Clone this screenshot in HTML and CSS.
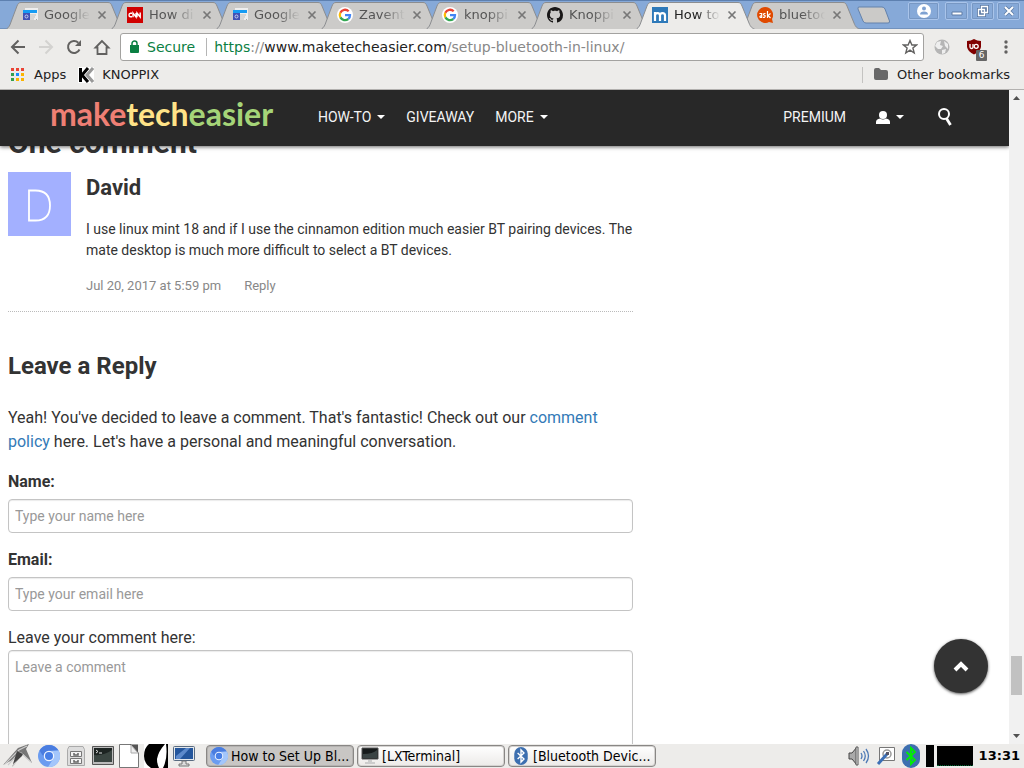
FILE: index.html
```
<!DOCTYPE html>
<html lang="en">
<head>
  <meta charset="UTF-8" />
  <meta name="viewport" content="width=device-width, initial-scale=1.0"/>
  <title>How to Set Up Bluetooth in Linux</title>
  <link rel="stylesheet" href="styles.css">
</head>
<body>

  <!-- shared icons -->
  <svg class="defs" width="0" height="0">
    <symbol id="tab-shape" viewBox="0 0 119 28"><path d="M0.5 28C3 26.500 4 24 5 21L11 5C12 2.500 13 1.500 15 1.500H102C104 1.500 105 2.500 106 5L113 22C114.500 26 116 27 118.500 28" stroke-width="1"/></symbol>
    <symbol id="close" viewBox="0 0 10 10"><path d="M1.500 1.500L8.500 8.500M8.500 1.500L1.500 8.500" fill="none" stroke="currentColor" stroke-width="1.700"/></symbol>
    <symbol id="gnews" viewBox="0 0 16 16"><path d="M3 1h13v12H3z" fill="#eee"/><path d="M1 3h14v3H1z" fill="#159bf3"/><path d="M8 8h6M8 10h5M8 12h4" stroke="#bbb"/><path d="M1 6h7v7H1z" fill="#3f51b5"/><circle cx="4.500" cy="9.500" r="1.500" fill="none" stroke="#c9cff0"/><path d="M14 12h1v1h-1z" fill="#aaa"/></symbol>
    <symbol id="google" viewBox="0 0 16 16"><circle cx="8" cy="8" r="8" fill="#fff"/><g fill="none" stroke-width="2.300"><path d="M11.700 4.300A5.200 5.200 0 0 0 3.300 5.800" stroke="#ea4335"/><path d="M3.300 5.800A5.200 5.200 0 0 0 3.400 10.400" stroke="#fbbc05"/><path d="M3.400 10.400A5.200 5.200 0 0 0 11.300 12" stroke="#34a853"/><path d="M11.300 12A5 5 0 0 0 13 8.200H8" stroke="#4285f4"/></g></symbol>
    <symbol id="chromium" viewBox="0 0 22 22"><circle cx="11" cy="11" r="11" fill="#6b9cf0"/><path d="M1.500 5.500A11 11 0 0 1 20.500 5.500L11 6A5 5 0 0 0 6.300 13z" fill="#4a7de0"/><path d="M20.500 5.500A11 11 0 0 1 10 22l5.500-8.500A5 5 0 0 0 11 6z" fill="#a3c6fb"/><circle cx="11" cy="11" r="5.300" fill="#eef4ff"/><circle cx="11" cy="11" r="4" fill="#477ee5"/></symbol>
    <symbol id="bluetooth" viewBox="0 0 18 24"><rect width="18" height="24" rx="9" fill="#3d6fb0"/><path d="M4.500 8L13 16L9 20V4L13 8L4.500 16" fill="none" stroke="currentColor" stroke-width="1.800"/></symbol>
  </svg>

  <!-- Browser tabs -->
  <div class="tab-strip">
    <div class="tabs">
      <div class="tab">
        <svg class="tab-bg"><use href="#tab-shape"/></svg>
        <svg class="favicon"><use href="#gnews"/></svg>
        <span class="tab-title">Google</span>
        <button class="tab-close" aria-label="Close tab"><svg><use href="#close"/></svg></button>
      </div>
      <div class="tab">
        <svg class="tab-bg"><use href="#tab-shape"/></svg>
        <svg class="favicon" viewBox="0 0 16 16"><path d="M0 0h16v16H0z" fill="#d10000"/><path d="M5 6.200H3.500Q2 6.200 2 8T3.500 9.800H5M6 10.300V6L9 10V6M10 10.300V6L13.200 10V5.500" fill="none" stroke="#fff" stroke-width="1.400"/></svg>
        <span class="tab-title">How di</span>
        <button class="tab-close" aria-label="Close tab"><svg><use href="#close"/></svg></button>
      </div>
      <div class="tab">
        <svg class="tab-bg"><use href="#tab-shape"/></svg>
        <svg class="favicon"><use href="#gnews"/></svg>
        <span class="tab-title">Google</span>
        <button class="tab-close" aria-label="Close tab"><svg><use href="#close"/></svg></button>
      </div>
      <div class="tab">
        <svg class="tab-bg"><use href="#tab-shape"/></svg>
        <svg class="favicon"><use href="#google"/></svg>
        <span class="tab-title">Zavent</span>
        <button class="tab-close" aria-label="Close tab"><svg><use href="#close"/></svg></button>
      </div>
      <div class="tab">
        <svg class="tab-bg"><use href="#tab-shape"/></svg>
        <svg class="favicon"><use href="#google"/></svg>
        <span class="tab-title">knoppi</span>
        <button class="tab-close" aria-label="Close tab"><svg><use href="#close"/></svg></button>
      </div>
      <div class="tab">
        <svg class="tab-bg"><use href="#tab-shape"/></svg>
        <svg class="favicon" viewBox="0 0 16 16"><path fill="#191717" d="M8 0C3.580 0 0 3.580 0 8c0 3.540 2.290 6.530 5.470 7.590.4.070.55-.17.55-.38 0-.19-.01-.82-.01-1.490-2.010.37-2.530-.49-2.690-.94-.09-.23-.48-.94-.82-1.130-.28-.15-.68-.52-.01-.53.63-.01 1.080.58 1.230.82.72 1.210 1.870.87 2.330.66.07-.52.28-.87.51-1.070-1.780-.2-3.640-.89-3.640-3.950 0-.87.31-1.590.82-2.150-.08-.2-.36-1.020.08-2.120 0 0 .67-.21 2.200.82.64-.18 1.320-.27 2-.27s1.360.09 2 .27c1.530-1.040 2.200-.82 2.200-.82.44 1.100.16 1.920.08 2.120.51.56.82 1.270.82 2.150 0 3.070-1.870 3.750-3.650 3.950.29.25.54.73.54 1.480 0 1.070-.01 1.930-.01 2.200 0 .21.15.46.55.38A8 8 0 0 0 16 8c0-4.420-3.580-8-8-8z"/></svg>
        <span class="tab-title">Knoppi</span>
        <button class="tab-close" aria-label="Close tab"><svg><use href="#close"/></svg></button>
      </div>
      <div class="tab active">
        <svg class="tab-bg"><use href="#tab-shape"/></svg>
        <svg class="favicon" viewBox="0 0 16 16"><path d="M0 0h16v16H0z" fill="#2e79b9"/><path d="M3 14V5M3 8.500C3 5.200 8 5.200 8 8.500V14M8 8.500C8 5.200 13 5.200 13 8.500V14" fill="none" stroke="#fff" stroke-width="2.200"/></svg>
        <span class="tab-title">How to</span>
        <button class="tab-close" aria-label="Close tab"><svg><use href="#close"/></svg></button>
      </div>
      <div class="tab">
        <svg class="tab-bg"><use href="#tab-shape"/></svg>
        <svg class="favicon" viewBox="0 0 16 16"><path d="M8 0a8 8 0 1 0 4 15l4 1-1-4A8 8 0 0 0 8 0z" fill="#e04a00"/><path d="M2.500 6.500h2.200v4H3.500q-1.500-1 1-2M8.500 6.500H7q-1 1.300 .5 1.800t0 2H6M10.500 4v7M13.500 6.500l-2.500 2 2.500 2.500" fill="none" stroke="#fff" stroke-width="1.200"/></svg>
        <span class="tab-title">bluetoo</span>
        <button class="tab-close" aria-label="Close tab"><svg><use href="#close"/></svg></button>
      </div>
    </div>
    <button class="new-tab" aria-label="New tab"><svg width="34" height="18" viewBox="0 0 34 18"><path d="M2 1H25Q27 1 28 3L32.500 15Q33 17 31 17H9Q7 17 6 15L1 3Q0.500 1 2 1z" fill="#cbcac8" stroke="#6482ab"/></svg></button>
    <div class="window-buttons">
      <button class="user" aria-label="User"><svg width="14" height="14" viewBox="0 0 14 14"><circle cx="7" cy="7" r="7" fill="#fff"/><circle cx="7" cy="4.500" r="2" fill="#7fa2d2"/><path d="M3 10.500Q3 7.500 7 7.500T11 10.500z" fill="#7fa2d2"/></svg></button>
      <button aria-label="Minimize"><svg width="12" height="12" viewBox="0 0 12 12"><path d="M1 7h10v3H1z" fill="#fff" stroke="#5d7ba5"/></svg></button>
      <button aria-label="Restore"><svg width="12" height="12" viewBox="0 0 12 12" fill="none"><path d="M4.500 1.500h6v6h-6zM1.500 4.500h6v6h-6z" stroke="#5d7ba5" stroke-width="3"/><path d="M4.500 1.500h6v6h-6zM1.500 4.500h6v6h-6z" stroke="#fff" stroke-width="1.300"/></svg></button>
      <button aria-label="Close"><svg width="12" height="12" viewBox="0 0 12 12"><path d="M2 2L10 10M10 2L2 10" stroke="#5d7ba5" stroke-width="3.500"/><path d="M2 2L10 10M10 2L2 10" stroke="#fff" stroke-width="2"/></svg></button>
    </div>
  </div>

  <!-- Toolbar -->
  <div class="toolbar">
    <div class="nav-buttons">
      <button aria-label="Back"><svg width="16" height="16" viewBox="0 0 16 16"><path d="M15 8H2M8.500 1.500L2 8l6.500 6.500" fill="none" stroke="#626160" stroke-width="2"/></svg></button>
      <button aria-label="Forward"><svg width="16" height="16" viewBox="0 0 16 16"><path d="M1 8H14M7.500 1.500L14 8l-6.500 6.500" fill="none" stroke="#d3d2d0" stroke-width="2"/></svg></button>
      <button aria-label="Reload"><svg width="16" height="16" viewBox="0 0 16 16"><path d="M13.500 10.500A6 6 0 1 1 12.300 3.700" fill="none" stroke="#626160" stroke-width="2"/><path d="M15 1v6H9z" fill="#626160"/></svg></button>
      <button aria-label="Home"><svg width="18" height="16" viewBox="0 0 18 16"><path d="M9 2L2.500 8.500H4.500V15H13.500V8.500H15.500z" fill="none" stroke="#626160" stroke-width="1.800"/></svg></button>
    </div>
    <div class="address-bar">
      <svg width="9" height="13" viewBox="0 0 9 13"><path d="M0 5h9v7q0 1-1 1H1q-1 0-1-1z" fill="#0b8043"/><path d="M2 6V3.500a2.500 2.500 0 0 1 5 0V6" fill="none" stroke="#0b8043" stroke-width="1.500"/></svg>
      <span class="secure">Secure</span>
      <div class="url" role="textbox" contenteditable="true" spellcheck="false" aria-label="Address"><span class="scheme">https</span>://<span class="host">www.maketecheasier.com</span>/setup-bluetooth-in-linux/</div>
      <button aria-label="Bookmark this page"><svg width="16" height="16" viewBox="0 0 16 16"><path d="M8 1.500L9.900 6H14.500L10.900 9L12.200 14L8 11.200L3.800 14L5.100 9L1.500 6H6.100z" fill="none" stroke="#626160" stroke-width="1.400"/></svg></button>
    </div>
    <div class="extensions">
      <button aria-label="Web extension"><svg width="16" height="16" viewBox="0 0 16 16"><circle cx="8" cy="8" r="7.500" fill="#b5b5b5"/><path d="M3 3l4-1-1 4 3 1-2 3H4L1 7zM10 2l4 3v5l-3-3zM8 11l4-1-1 4-3 1z" fill="#eee"/></svg></button>
      <button class="ublock" aria-label="uBlock"><svg width="16" height="16" viewBox="0 0 16 16"><path d="M8 0Q11 2 15 2V8Q14 13 8 15.500Q2 13 1 8V2Q5 2 8 0z" fill="#800000"/><path d="M4 5v3q0 1.500 1.500 1.500T7 8V5" fill="none" stroke="#fff" stroke-width="1.300"/><circle cx="10.200" cy="7.300" r="2" fill="none" stroke="#fff" stroke-width="1.300"/></svg><span class="badge">6</span></button>
      <button aria-label="Menu"><svg width="4" height="14" viewBox="0 0 4 14" fill="#626160"><circle cx="2" cy="2" r="1.700"/><circle cx="2" cy="7" r="1.700"/><circle cx="2" cy="12" r="1.700"/></svg></button>
    </div>
  </div>

  <div class="bookmarks">
    <a href="#"><svg width="16" height="14" viewBox="0 0 16 14"><path d="M1 0h3v3H1zM6 0h3v3H6zM11 0h3v3h-3z" fill="#ea4335"/><path d="M1 5h3v3H1zM1 10h3v3H1z" fill="#34a04f"/><path d="M6 5h3v3H6z" fill="#1a8cff"/><path d="M11 5h3v3h-3zM6 10h3v3H6zM11 10h3v3h-3z" fill="#fbb400"/></svg>Apps</a>
    <a href="#"><svg width="16" height="16" viewBox="0 0 16 16"><path d="M0 0h16v16H0z" fill="#fff"/><path d="M15 1L9 8l6 7" fill="none" stroke="#999" stroke-width="3"/><path d="M2.500 1v14M10 1L4 8l6 7" fill="none" stroke="#000" stroke-width="3"/></svg>KNOPPIX</a>
    <a class="other" href="#"><svg width="16" height="13" viewBox="0 0 16 13"><path d="M1 2q0-2 2-2h3l2 2h5q2 0 2 2v6q0 2-2 2H3q-2 0-2-2z" fill="#686868"/></svg>Other bookmarks</a>
  </div>

  <!-- Web page -->
  <div class="viewport">
    <div class="page">
      <header class="site-header">
        <a class="logo" href="#"><span class="make">make</span><span class="tech">tech</span><span class="easier">easier</span></a>
        <nav class="menu">
          <a class="dropdown" href="#">HOW-TO</a>
          <a href="#">GIVEAWAY</a>
          <a class="dropdown" href="#">MORE</a>
        </nav>
        <nav class="menu account">
          <a href="#">PREMIUM</a>
          <a class="dropdown" href="#" aria-label="Account"><svg width="14" height="13" viewBox="0 0 14 13" fill="#fff"><circle cx="7" cy="4" r="4"/><path d="M0 13v-2q0-3 4-3.500 3 2 6 0 4 .5 4 3.500v2z"/></svg></a>
          <a href="#" aria-label="Search"><svg width="16" height="18" viewBox="0 0 16 18" fill="none" stroke="#fff"><circle cx="7" cy="6" r="5" stroke-width="2"/><path d="M9.500 10.500L13.500 17" stroke-width="2.800"/></svg></a>
        </nav>
      </header>

      <main class="content">
        <h2 class="comments-title">One comment</h2>
        <article class="comment">
          <svg class="avatar" viewBox="0 0 63 64"><path d="M0 0h63v64H0z" fill="#a3b0ff"/><path d="M21 18.500V48.500H27.500Q42 48.500 42 33.500T27.500 18.500z" fill="none" stroke="#fff" stroke-width="1.800"/></svg>
          <div>
            <h3>David</h3>
            <p>I use linux mint 18 and if I use the cinnamon edition much easier BT pairing devices. The mate desktop is much more difficult to select a BT devices.</p>
            <div class="comment-meta"><span>Jul 20, 2017 at 5:59 pm</span><a href="#">Reply</a></div>
          </div>
        </article>

        <h3 class="reply-title">Leave a Reply</h3>
        <form>
          <p>Yeah! You've decided to leave a comment. That's fantastic! Check out our <a href="#">comment policy</a> here. Let's have a personal and meaningful conversation.</p>
          <div class="field">
            <label class="strong" for="name">Name:</label>
            <input id="name" type="text" placeholder="Type your name here">
          </div>
          <div class="field">
            <label class="strong" for="email">Email:</label>
            <input id="email" type="email" placeholder="Type your email here">
          </div>
          <label for="comment">Leave your comment here:</label>
          <textarea id="comment" rows="8" placeholder="Leave a comment"></textarea>
        </form>
      </main>
      <button class="to-top" aria-label="Back to top"><svg width="16" height="12" viewBox="0 0 16 12"><path d="M2 10L8 4L14 10" fill="none" stroke="#fff" stroke-width="4"/></svg></button>
    </div>
    <div class="scrollbar">
      <svg width="15" height="15" viewBox="0 0 15 15"><path d="M4 10L7.500 6L11 10z" fill="#505050"/></svg>
      <div class="track-above"></div>
      <div class="thumb"></div>
      <div class="track-below"></div>
      <svg width="15" height="15" viewBox="0 0 15 15"><path d="M4 5L7.500 9L11 5z" fill="#505050"/></svg>
    </div>
  </div>

  <!-- Desktop panel -->
  <div class="taskbar">
    <div class="launchers">
      <button aria-label="Menu"><svg width="30" height="24" viewBox="0 0 30 24"><path d="M0 21L15 4L26 0L23 5L29 19L20 10L9 23L13 14z" fill="#777"/><path d="M2 20L16 6L24 2M10 22L18 9L28 18M5 21L17 8" fill="none" stroke="#ccc" stroke-width="1.200"/><path d="M14 7L20 10L23 3L19 12L10 20" fill="#444"/></svg></button>
      <button aria-label="Chromium"><svg width="22" height="22"><use href="#chromium"/></svg></button>
      <button aria-label="Files"><svg width="22" height="22" viewBox="0 0 20 22"><path d="M3 1.500h14l1.500 3v16h-17v-16z" fill="#ddd" stroke="#aaa"/><path d="M4.500 6.500h11v5h-11zM4.500 13.500h11v5h-11z" fill="#f4f4f4" stroke="#777"/><path d="M8 8v2h4V8M8 15v2h4v-2" fill="none" stroke="#666" stroke-width="1.500"/></svg></button>
      <button aria-label="Terminal"><svg width="22" height="20" viewBox="0 0 22 20"><path d="M.5.500h21v18H.5z" fill="#bbb" stroke="#555"/><path d="M2 2h18v14H2z" fill="#1d2422"/><path d="M2 9Q12 10 20 4v12H2z" fill="#3a4541"/><path d="M4 4l2 1.500L4 7M7 7h3" fill="none" stroke="#ddd"/></svg></button>
      <button aria-label="Office"><svg width="20" height="24" viewBox="0 0 20 24"><path d="M.5.500H12L19.500 9V23.500H.5z" fill="#fff" stroke="#777"/><path d="M11 .5h8V9z" fill="#555"/><path d="M12 1v8h7z" fill="#eee" stroke="#aaa"/></svg></button>
      <button aria-label="Knoppix"><svg width="24" height="24" viewBox="0 0 24 24"><path d="M0 0h24v24H0z" fill="#fff"/><path d="M5 0H21Q14 8 13 15Q13 20 15 24H7Q0 20 0 12Q0 4 5 0zM22 0h2v24h-5Q24 14 22 0z"/></svg></button>
      <button aria-label="Desktop"><svg width="22" height="22" viewBox="0 0 22 22"><rect x=".5" y="1.500" width="21" height="14" rx="1" fill="#e4e8ec" stroke="#596b80"/><path d="M2 3h18v11H2z" fill="#24569c"/><path d="M3 11L13 3h4L7 14H3z" fill="#5d8acb"/><path d="M9 16h4v3h3v2H6v-2h3z" fill="#ddd" stroke="#777"/></svg></button>
    </div>
    <div class="tasks">
      <button class="task current"><svg width="18" height="18"><use href="#chromium"/></svg><span>How to Set Up Bl...</span></button>
      <button class="task"><svg width="18" height="18" viewBox="0 0 18 18"><path d="M1 1h16v11H1z" fill="#171b1b" stroke="#555"/><path d="M2 7Q12 7 16 3v8H2z" fill="#3b4444"/><path d="M7 13h4v2h3v2H4v-2h3z" fill="#ccc"/></svg><span>[LXTerminal]</span></button>
      <button class="task"><svg class="bt" width="18" height="18"><use href="#bluetooth"/></svg><span>[Bluetooth Devic...</span></button>
    </div>
    <div class="tray">
      <svg width="22" height="22" viewBox="0 0 22 22"><path d="M1 8h3l5-6v18l-5-6H1z" fill="#aaa" stroke="#444"/><path d="M8 2h2v18H8z" fill="#eee" stroke="#555"/><g fill="none" stroke="#4d79b5" stroke-width="1.300"><path d="M13 8q2 3 0 6M15.500 6q3.500 5 0 10M18 4q5 7 0 14"/></g></svg>
      <svg width="20" height="20" viewBox="0 0 20 20"><path d="M3.500 1.500h15v13h-15z" fill="#fff" stroke="#777"/><circle cx="11" cy="8" r="4" fill="none" stroke="#999" stroke-width="1.500"/><path d="M11 8L2 18" stroke="#3c6fb5" stroke-width="3"/><path d="M10 6h3v3h-3z" fill="#556"/></svg>
      <svg class="bt-on" width="18" height="24"><use href="#bluetooth"/></svg>
      <div class="monitors"><i class="battery"></i><i class="cpu"></i></div>
      <time>13:31</time>
    </div>
  </div>

</body>
</html>
```
FILE: styles.css
```
:root {
  --chrome: #edecea;
  --frame: #86a9d8;
  --dark: #282828;
  --text: #333;
  --link: #337ab7;
  --muted: #888;
}

* {
  box-sizing: border-box;
}

body {
  margin: 0;
  height: 100vh;
  display: flex;
  flex-direction: column;
  overflow: hidden;
  font-family: Roboto, "Liberation Sans", sans-serif;
  font-size: 16px;
  line-height: 24px;
  color: var(--text);
  background: #fff;
}

button {
  padding: 0;
  border: 0;
  background: none;
  font: inherit;
  color: inherit;
  cursor: pointer;
}

svg {
  display: block;
  flex: none;
}

h2, h3, p {
  margin: 0;
}

a {
  text-decoration: none;
}

.defs {
  position: absolute;
}

/* Tabs */
.tab-strip {
  display: flex;
  flex: none;
  height: 29px;
  padding-left: 6px;
  background: var(--frame);
  border-top: 1px solid #5d80b0;
  box-shadow: inset 0 -1px #7292bd;
  font: 13px/16px "DejaVu Sans", sans-serif;
}

.tabs {
  display: flex;
}

.tab {
  position: relative;
  display: flex;
  align-items: center;
  width: 119px;
  height: 28px;
  padding-left: 16px;
  margin-right: -14px;
  color: #555;
}

.tab-bg {
  position: absolute;
  left: 0;
  top: 0;
  width: 119px;
  height: 28px;
  fill: #cccbc9;
  stroke: #8b8d90;
}

.tab.active {
  z-index: 1;
  color: #222;
}

.tab.active .tab-bg {
  fill: var(--chrome);
}

.favicon {
  position: relative;
  width: 16px;
  height: 16px;
}

.tab-title {
  position: relative;
  width: 46px;
  margin-left: 6px;
  overflow: hidden;
  white-space: nowrap;
  mask-image: linear-gradient(to right, #000 50%, transparent);
}

.tab-close {
  position: relative;
  margin-left: 7px;
  color: #777;
}

.tab-close svg {
  width: 10px;
  height: 10px;
}

.new-tab {
  margin: 4px 0 0 11px;
  height: 20px;
}

.window-buttons {
  display: flex;
  gap: 3px;
  margin: 1px 4px 0 auto;
}

.window-buttons button {
  display: flex;
  align-items: center;
  justify-content: center;
  width: 23px;
  height: 18px;
  border: 1px solid #a9c4ea;
  border-radius: 2px;
  outline: 1px solid #7797c3;
  outline-offset: -2px;
}

.window-buttons .user {
  width: 31px;
  margin-right: 3px;
}

/* Toolbar */
.toolbar {
  display: flex;
  align-items: center;
  flex: none;
  height: 33px;
  padding: 2px 4px 0;
  background: var(--chrome);
}

.nav-buttons,
.extensions {
  display: flex;
}

.nav-buttons button {
  display: flex;
  justify-content: center;
  width: 28px;
}

.address-bar {
  display: flex;
  align-items: center;
  flex: 1;
  height: 28px;
  margin-left: 4px;
  padding: 0 5px 0 9px;
  background: #fff;
  border: 1px solid #a3a2a0;
  border-radius: 3px;
  font: 14px/18px "DejaVu Sans", sans-serif;
}

.secure {
  margin-left: 8px;
  padding-right: 11px;
  border-right: 1px solid #b5b5b5;
  color: #0b8043;
}

.url {
  flex: 1;
  padding-left: 7px;
  color: #888;
  white-space: nowrap;
}

.scheme {
  color: #0b8043;
}

.host {
  color: #222;
}

.extensions button {
  display: flex;
  justify-content: center;
  align-items: center;
  width: 32px;
}

.extensions {
  margin: 0 -2px 0 2px;
}

.ublock {
  position: relative;
}

.badge {
  position: absolute;
  right: 3px;
  top: 11px;
  width: 11px;
  height: 11px;
  background: #666;
  border-radius: 1px;
  color: #fff;
  font: 9px/11px "DejaVu Sans", sans-serif;
}

/* Bookmarks bar */
.bookmarks {
  display: flex;
  align-items: center;
  flex: none;
  gap: 12px;
  height: 28px;
  padding: 0 14px 2px 10px;
  background: var(--chrome);
  border-bottom: 1px solid #b3b1af;
  font: 13px/16px "DejaVu Sans", sans-serif;
}

.bookmarks a {
  display: flex;
  align-items: center;
  gap: 8px;
  color: #222;
}

.bookmarks .other {
  margin-left: auto;
  padding-left: 10px;
  border-left: 1px solid #c4c3c1;
}

/* Page */
.viewport {
  display: flex;
  flex: 1;
  min-height: 0;
}

.page {
  position: relative;
  flex: 1;
  overflow: hidden;
}

.site-header {
  position: absolute;
  top: 0;
  left: 0;
  right: 0;
  display: flex;
  align-items: center;
  height: 56px;
  padding: 0 56px 2px 50px;
  background: var(--dark);
  box-shadow: 0 1px 4px rgba(0, 0, 0, 0.6);
}

.logo {
  width: 234px;
  padding-bottom: 6px;
  font: bold 32px/40px Lato, sans-serif;
}

.make {
  color: #ef7f74;
}

.tech {
  color: #ffe388;
}

.easier {
  color: #a5d478;
}

.menu {
  display: flex;
  align-items: center;
  gap: 21px;
  margin-left: 34px;
  font-size: 14px;
}

.menu a {
  display: flex;
  align-items: center;
  color: #f4f4f4;
}

.account {
  gap: 30px;
  margin-left: auto;
}

.account a:last-child {
  margin-left: 3px;
}

.dropdown::after {
  content: "";
  margin-left: 6px;
  border: 4px solid transparent;
  border-top-color: #fff;
  border-bottom: 0;
}

.content {
  max-width: 641px;
  padding: 35px 8px 0;
}

.comments-title {
  margin-bottom: 11px;
  font-size: 30px;
  line-height: 36px;
}

.comment {
  display: flex;
  gap: 15px;
  padding-bottom: 15px;
  border-bottom: 1px dotted #bbb;
}

.avatar {
  width: 63px;
  height: 64px;
}

.comment h3 {
  font-size: 22px;
  line-height: 32px;
}

.comment p {
  margin: 15px 0;
  font-size: 14px;
  line-height: 21px;
}

.comment-meta {
  display: flex;
  gap: 23px;
  font-size: 13px;
  line-height: 20px;
  color: var(--muted);
}

.comment-meta a {
  color: var(--muted);
}

.reply-title {
  margin: 40px 0 26px;
  font-size: 24px;
  line-height: 28px;
}

form a {
  color: var(--link);
}

form p {
  margin-bottom: 16px;
}

.field {
  margin-bottom: 15px;
}

form label {
  display: block;
}

.strong {
  margin-bottom: 5px;
  font-weight: bold;
}

input,
textarea {
  display: block;
  width: 100%;
  height: 34px;
  padding: 6px;
  border: 1px solid #c4c4c4;
  border-radius: 4px;
  font: 14px/20px Roboto, "Liberation Sans", sans-serif;
  color: #555;
  box-shadow: inset 0 1px 1px rgba(0, 0, 0, 0.08);
}

textarea {
  height: auto;
  resize: none;
}

::placeholder {
  color: #999;
  opacity: 1;
}

.to-top {
  position: absolute;
  right: 21px;
  bottom: 51px;
  display: flex;
  align-items: center;
  justify-content: center;
  width: 54px;
  height: 54px;
  border-radius: 50%;
  background: #333;
  box-shadow: 0 1px 3px rgba(0, 0, 0, 0.7);
}

.scrollbar {
  display: flex;
  flex-direction: column;
  width: 15px;
  background: #f1f1f1;
}

.track-above {
  flex: 551;
}

.thumb {
  flex: 39;
  margin: 0 2px;
  background: #c1c1c1;
}

.track-below {
  flex: 34;
}

/* Taskbar */
.taskbar {
  display: flex;
  align-items: center;
  flex: none;
  height: 24px;
  padding: 0 4px 0 3px;
  background: var(--chrome);
}

.launchers,
.tasks,
.tray {
  display: flex;
  align-items: center;
}

.launchers {
  gap: 5px;
}

.tasks {
  gap: 3px;
  margin-left: 11px;
}

.task {
  display: flex;
  align-items: center;
  gap: 3px;
  width: 148px;
  height: 22px;
  padding: 0 3px;
  border: 1px solid #898785;
  border-radius: 4px;
  background: linear-gradient(#fff, #eceae8);
  box-shadow: inset 0 0 0 1px #d5d3d1;
  font: 14px/18px "DejaVu Sans Condensed", "DejaVu Sans", sans-serif;
  color: #000;
  white-space: nowrap;
}

.task.current {
  background: #c8c6c4;
  box-shadow: inset 0 0 0 1px #b5b3b1;
}

.bt {
  color: #fff;
}

.tray {
  gap: 6px;
  margin-left: auto;
}

.bt-on {
  color: #00f000;
}

.monitors {
  display: flex;
  align-items: center;
  gap: 3px;
}

.battery {
  width: 8px;
  height: 22px;
  background: #000;
}

.cpu {
  width: 36px;
  height: 20px;
  background: #000;
  border-bottom: 1px dotted #063;
}

time {
  font: bold 13px/16px "DejaVu Sans", sans-serif;
  color: #000;
}
```
